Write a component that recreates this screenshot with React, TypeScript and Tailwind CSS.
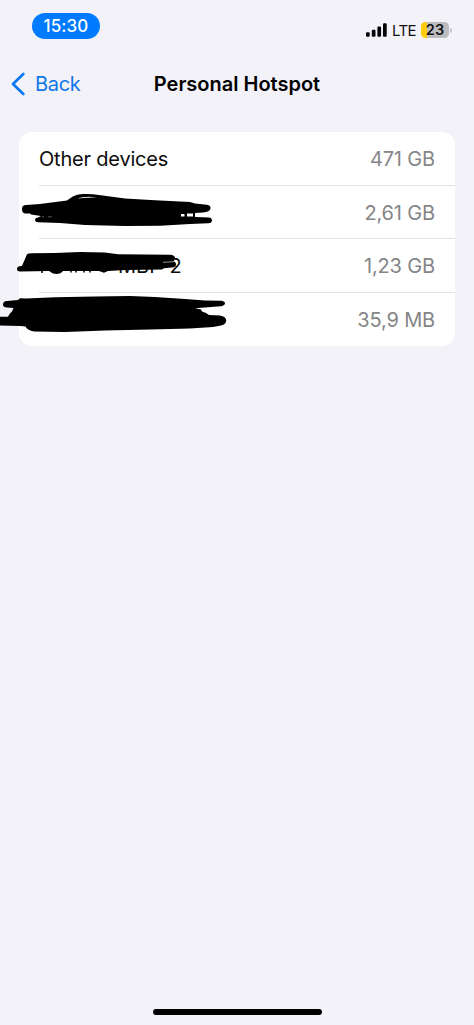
type Device = {
  id: string
  name: string
  usage: string
}

const devices: Device[] = [
  { id: 'other', name: 'Other devices', usage: '471 GB' },
  { id: 'hidden-1', name: '', usage: '2,61 GB' },
  { id: 'mbp', name: 'MBP-2', usage: '1,23 GB' },
  { id: 'hidden-2', name: '', usage: '35,9 MB' },
]

function SignalBars() {
  return (
    <svg className="h-[14px] w-[21px]" viewBox="0 0 21 14" fill="#050505">
      <rect x="0" y="9.2" width="3.7" height="4.6" rx="1.1" />
      <rect x="5.8" y="6.8" width="3.7" height="7" rx="1.1" />
      <rect x="11.4" y="3.6" width="3.7" height="10.2" rx="1.1" />
      <rect x="17" y="0.2" width="3.7" height="13.6" rx="1.1" />
    </svg>
  )
}

function Battery() {
  return (
    <div className="flex items-center gap-px">
      <div className="flex h-4 w-[28px] items-center justify-center rounded-[4.5px] bg-linear-to-r from-[#ffcc0c] from-23% to-[#bdbdc0] to-23%">
        <span className="text-[14.5px] leading-none font-semibold text-[#111]">23</span>
      </div>
      <div className="h-[5px] w-[2px] rounded-r-full bg-[#c4c4c8]" />
    </div>
  )
}

function StatusBar() {
  return (
    <div className="flex h-[52px] items-start justify-between pt-[13px] pr-[22px] pl-8">
      <div className="flex h-[26px] w-[68px] items-center justify-center rounded-full bg-[#007aff] pt-0.5 text-[17px] font-medium tracking-[0.1px] text-white">
        15:30
      </div>
      <div className="flex h-[34px] items-center">
        <SignalBars />
        <span className="mr-[5px] ml-[5px] pt-px text-[15px] leading-none tracking-[-0.6px] text-[#111]">LTE</span>
        <Battery />
      </div>
    </div>
  )
}

function NavBar() {
  return (
    <div className="grid h-16 grid-cols-[1fr_auto_1fr] items-center">
      <button className="flex items-center pl-[11px] text-[20px] tracking-[-0.3px] text-[#1077e8]">
        <svg className="mr-[10px] h-6 w-[14px]" viewBox="0 0 14 24" fill="none" stroke="#0a78f0" strokeWidth="2.7" strokeLinecap="round" strokeLinejoin="round">
          <path d="M12.3 2 L2 12 L12.3 22" />
        </svg>
        Back
      </button>
      <h1 className="text-[20px] font-semibold text-black">Personal Hotspot</h1>
      <div />
    </div>
  )
}

// Marker strokes drawn over the private device names
function Scribbles() {
  return (
    <svg className="pointer-events-none absolute top-[185px] left-0 h-[155px] w-[240px]" viewBox="0 185 240 155">
      <path d="M22 209 Q22 205 26 205 L40 204 L67 200.5 C73 196 76 194.5 83 194 Q91 193.5 99 195 L125 198.5 L155 200.3 L190 202 L195 203.5 L207 204.7 Q211 205.5 210.5 208.5 Q210 212 203 212.6 L195 213 L195 217 L209 217.6 Q212 218 212 221 Q211.5 223.5 208 223.3 L190 224 L160 225.8 L125 226 L85 225 L60 223 L38 222.3 Q35 222 35 219.8 Q35.5 217.5 38 217.5 L41 216 L31 214.5 L30 213.5 L25 213.5 Q22 213 22 209 Z" />
      <path d="M77 198.4 Q84 196 97 197.2 Q86 197.8 77 198.4 Z M181 214 H184.5 V216.6 H181 Z M187 213.5 H193 V216.5 H187 Z" fill="#fff" />
      <path d="M42 216.6 H44 M48 216.8 H52" stroke="#777" strokeWidth="0.7" />
      <path d="M17 269 Q17 266.5 20 266.3 L22 265.8 L25 259 L27 254.2 Q28 253.3 32 253.3 L55 253 L80 252 L105 252.5 L118 254.2 L170 254.8 Q174 255 175 257.5 Q175 259.5 173.5 261 Q176.5 262.5 176 265 Q175.5 267 172 267.5 L164 268.3 L162 269.6 L125 270 L108 271 L104 272.7 L99 271 L63 271 Q60 275 53 273.5 L49 271 L20 271.5 Q17 271 17 269 Z" />
      <path d="M163 262.3 L174 261.7" stroke="#bbb" strokeWidth="0.8" />
      <path d="M42 270 V273 M71 270 V272.5 M76 270 V272.5 M84 270 V272.5 M90 270 V272.5" stroke="#000" strokeWidth="1.5" />
      <path d="M3 304.5 Q3 301.3 7 301 L18 300 L20 298.2 L26 298.6 L55 297.2 L95 296.5 L130 296 L155 297 L185 299 L205 300.5 L221 300.8 Q225 301.3 225 303.3 Q225 305.5 221 306.2 L195 308.2 L201 309.6 L202 311.6 L206 313 L209 315 L220 315.6 Q226 316.6 226.3 320.5 Q226 324.5 221 325.5 L213 327 L190 328.5 L150 329.5 L105 330.5 L65 332 L34 331.5 Q27 330 25.5 326.5 L20 326 L0 325.5 V316.8 H8 L9.5 314 L12 311.5 L13.5 308 L7 307.5 Q3 307.5 3 304.5 Z" />
    </svg>
  )
}

export default function App() {
  return (
    <div className="relative flex h-[1025px] w-[474px] flex-col overflow-hidden bg-[#f2f2f8] font-['Inter','Liberation_Sans',sans-serif]">
      <StatusBar />
      <NavBar />

      <ul className="mt-4 mr-[19.5px] ml-[19px] h-[214px] rounded-[13px] bg-white">
        {devices.map((device, i) => (
          <li key={device.id} className="h-[53.5px] pl-5">
            <div
              className={
                i < devices.length - 1
                  ? 'flex h-full items-center justify-between border-b border-[#e4e4e6] pt-[2px] pr-[19.5px] text-[20px]'
                  : 'flex h-full items-center justify-between pt-[2px] pr-[19.5px] text-[20px]'
              }
            >
              <span className={device.id === 'mbp' ? 'ml-[79px] text-[#0c0c0c]' : 'tracking-[-0.2px] text-[#0c0c0c]'}>
                {device.name}
              </span>
              <span className="tracking-[-0.15px] text-[#858587]">{device.usage}</span>
            </div>
          </li>
        ))}
      </ul>
      <Scribbles />

      <div className="mx-auto mt-auto mb-[10px] h-[6px] w-[169px] rounded-full bg-black" />
    </div>
  )
}
